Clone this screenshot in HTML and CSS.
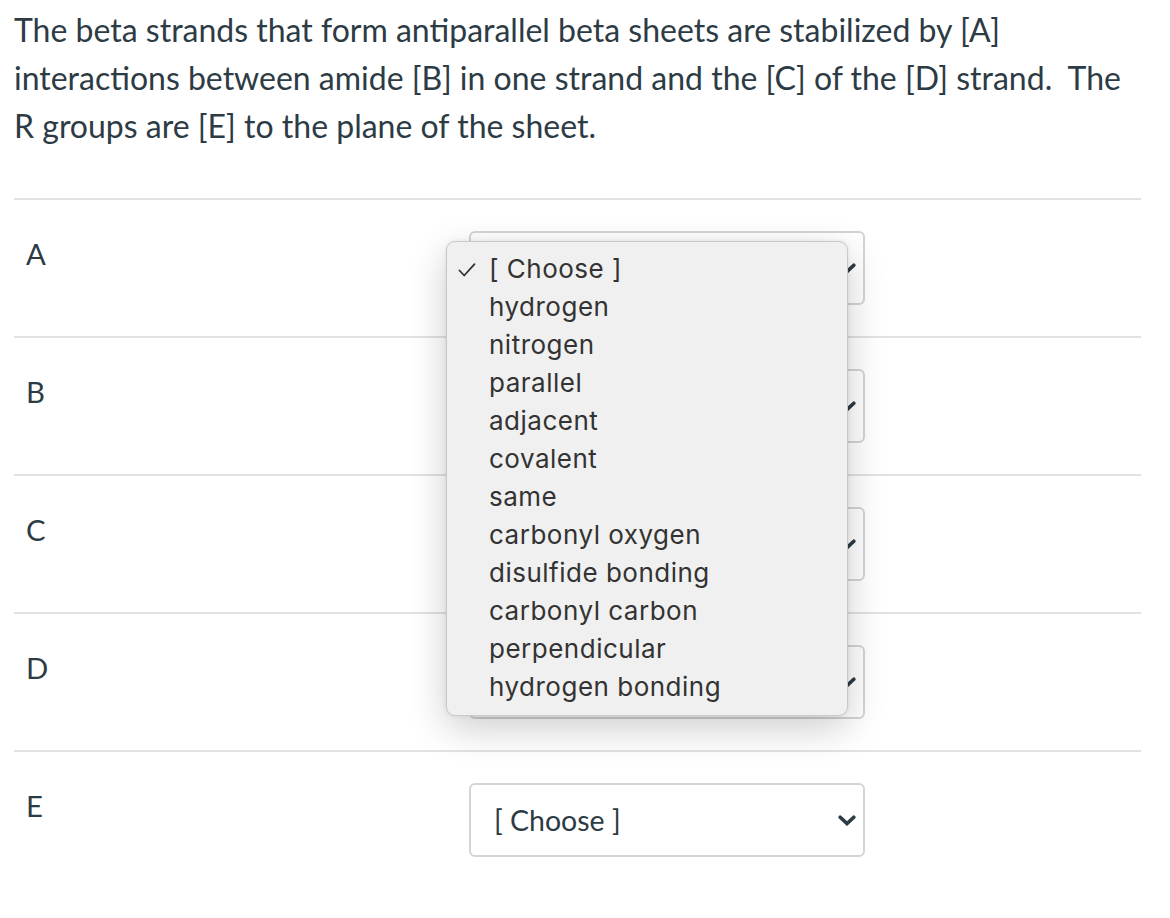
FILE: index.html
```html
<!DOCTYPE html>
<html>
<head>
<meta charset="utf-8">
<link rel="stylesheet" href="styles.css">
</head>
<body>
<div class="page">
  <p class="question">The beta strands that form antiparallel beta sheets are stabilized by [A]<br>interactions between amide [B] in one strand and the [C] of the [D] strand.&nbsp; The<br>R groups are [E] to the plane of the sheet.</p>
  <div class="answers">
    <div class="row">
      <div class="label">A</div>
      <div class="select"><span class="select-text">[ Choose ]</span><svg class="chev" width="18" height="11" viewBox="0 0 18 11"><path d="M2.2 2.2 L9 8.6 L15.8 2.2" fill="none" stroke="#2d3b45" stroke-width="3.6" stroke-linecap="round" stroke-linejoin="miter"/></svg></div>
    </div>
    <div class="row">
      <div class="label">B</div>
      <div class="select"><span class="select-text">[ Choose ]</span><svg class="chev" width="18" height="11" viewBox="0 0 18 11"><path d="M2.2 2.2 L9 8.6 L15.8 2.2" fill="none" stroke="#2d3b45" stroke-width="3.6" stroke-linecap="round" stroke-linejoin="miter"/></svg></div>
    </div>
    <div class="row">
      <div class="label">C</div>
      <div class="select"><span class="select-text">[ Choose ]</span><svg class="chev" width="18" height="11" viewBox="0 0 18 11"><path d="M2.2 2.2 L9 8.6 L15.8 2.2" fill="none" stroke="#2d3b45" stroke-width="3.6" stroke-linecap="round" stroke-linejoin="miter"/></svg></div>
    </div>
    <div class="row">
      <div class="label">D</div>
      <div class="select"><span class="select-text">[ Choose ]</span><svg class="chev" width="18" height="11" viewBox="0 0 18 11"><path d="M2.2 2.2 L9 8.6 L15.8 2.2" fill="none" stroke="#2d3b45" stroke-width="3.6" stroke-linecap="round" stroke-linejoin="miter"/></svg></div>
    </div>
    <div class="row">
      <div class="label">E</div>
      <div class="select"><span class="select-text">[ Choose ]</span><svg class="chev" width="18" height="11" viewBox="0 0 18 11"><path d="M2.2 2.2 L9 8.6 L15.8 2.2" fill="none" stroke="#2d3b45" stroke-width="3.6" stroke-linecap="round" stroke-linejoin="miter"/></svg></div>
    </div>
  </div>
  <ul class="menu">
    <li class="menu-item selected"><svg class="check" width="18" height="14" viewBox="0 0 18 14"><path d="M1.5 7.5 L6.2 12.5 L16.5 1.2" fill="none" stroke="#333" stroke-width="1.8" stroke-linecap="round" stroke-linejoin="round"/></svg>[ Choose ]</li>
    <li class="menu-item">hydrogen</li>
    <li class="menu-item">nitrogen</li>
    <li class="menu-item">parallel</li>
    <li class="menu-item">adjacent</li>
    <li class="menu-item">covalent</li>
    <li class="menu-item">same</li>
    <li class="menu-item">carbonyl oxygen</li>
    <li class="menu-item">disulfide bonding</li>
    <li class="menu-item">carbonyl carbon</li>
    <li class="menu-item">perpendicular</li>
    <li class="menu-item">hydrogen bonding</li>
  </ul>
</div>
</body>
</html>
```

FILE: styles.css
```css
html, body {
  margin: 0;
  padding: 0;
  background: #ffffff;
}

.page {
  position: relative;
  width: 1127px;
  padding: 6px 14px 0 14px;
  font-family: Lato, "Open Sans", sans-serif;
  color: #2d3b45;
}

.question {
  margin: 0;
  font-size: 32px;
  line-height: 48px;
  white-space: nowrap;
}

.answers {
  margin-top: 48px;
}

.row {
  display: grid;
  grid-template-columns: 443px 396px;
  align-items: start;
  border-top: 2px solid #e2e2e2;
  padding: 31px 0 31px 12px;
}

.label {
  font-size: 29.3px;
  line-height: 44px;
  padding-top: 1px;
}

.select {
  box-sizing: border-box;
  height: 74px;
  border: 2px solid #d2d5d8;
  border-radius: 6px;
  background: #ffffff;
  display: flex;
  align-items: center;
  justify-content: space-between;
  padding: 0 7px 0 23px;
}

.select-text {
  font-size: 28.5px;
  line-height: 1;
}

.chev {
  display: block;
}

.menu {
  position: absolute;
  left: 446px;
  top: 241px;
  width: 402px;
  box-sizing: border-box;
  margin: 0;
  padding: 8px 0 9px 0;
  list-style: none;
  background: #f0f0f0;
  border: 1px solid #c9c9c9;
  border-radius: 9px;
  box-shadow: 0 12px 38px rgba(0, 0, 0, 0.2), 0 0 4px rgba(0, 0, 0, 0.08);
  font-family: Inter, "Liberation Sans", Arial, sans-serif;
  color: #333333;
}

.menu-item {
  position: relative;
  height: 38px;
  line-height: 38px;
  font-size: 26px;
  letter-spacing: 0.5px;
  padding-left: 42px;
}

.check {
  position: absolute;
  left: 11px;
  top: 13px;
}
```
